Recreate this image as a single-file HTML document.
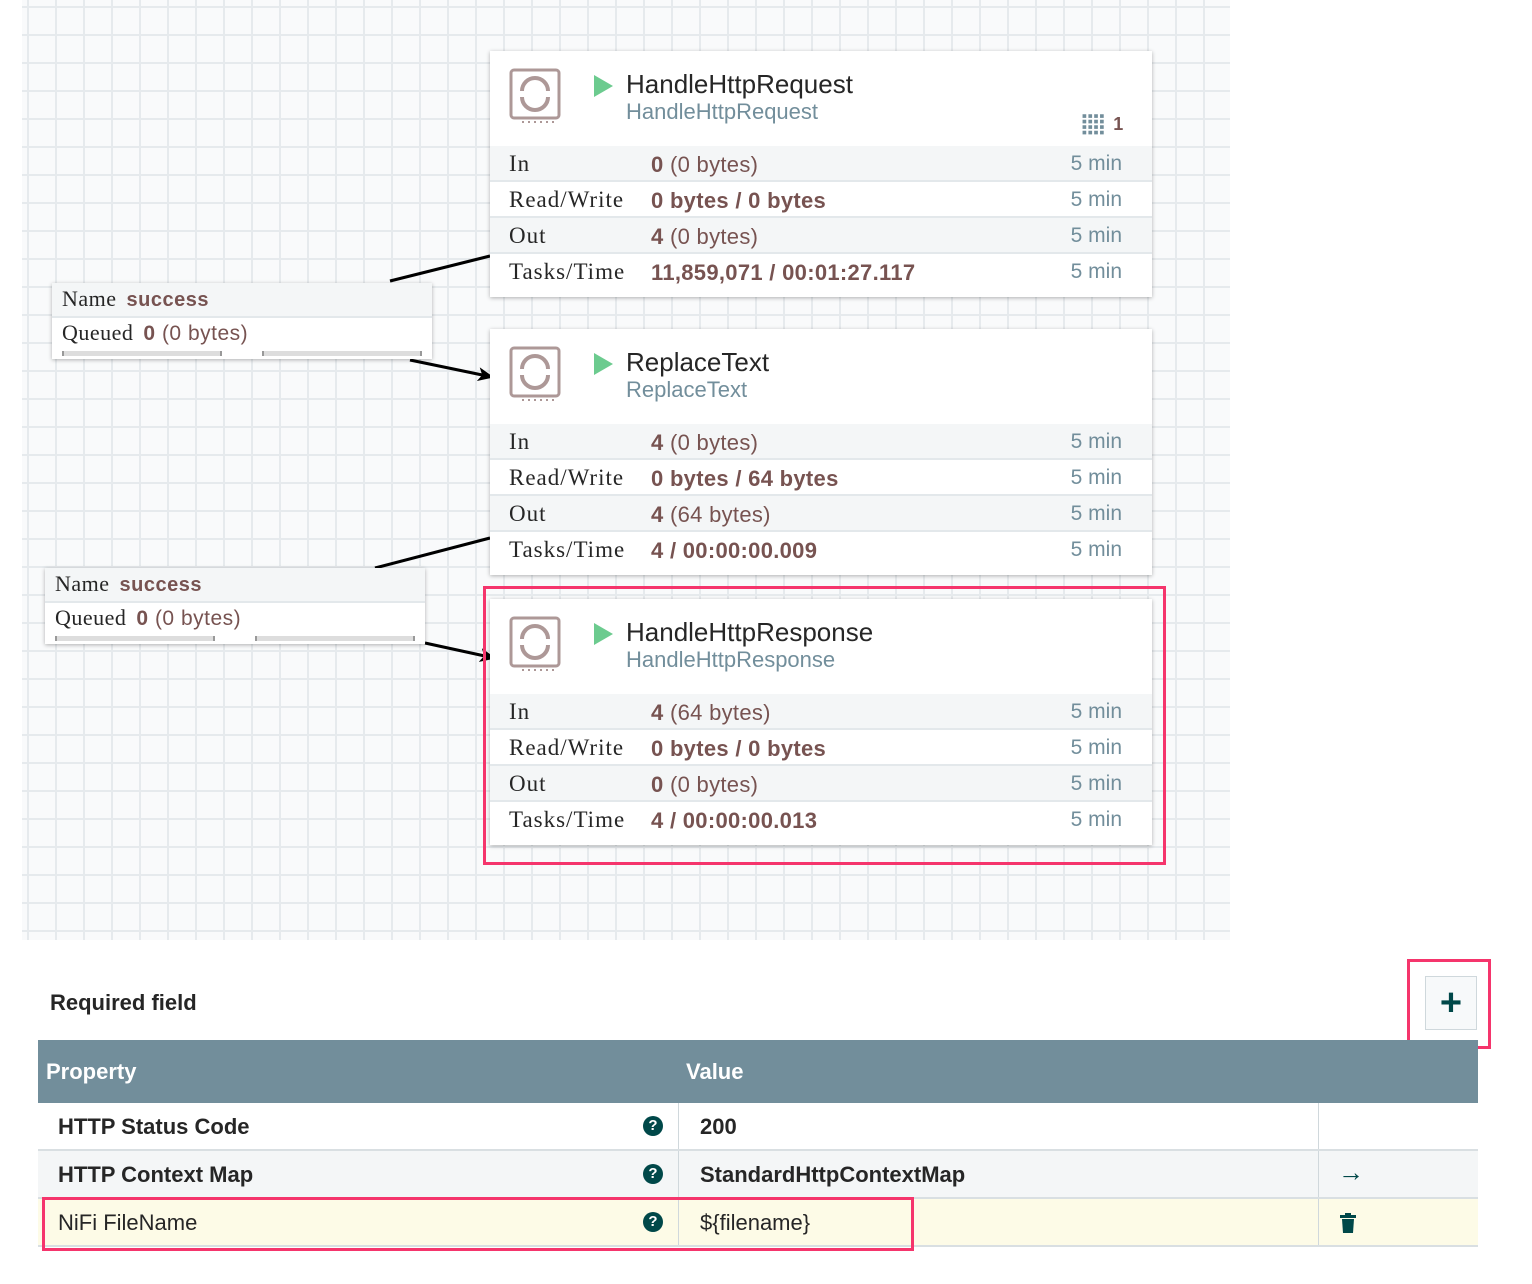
<!DOCTYPE html>
<html><head><meta charset="utf-8"><style>
*{margin:0;padding:0;box-sizing:border-box}
body{width:1532px;height:1284px;background:#fff;position:relative;overflow:hidden;font-family:"Liberation Sans",sans-serif}
.canvas{position:absolute;left:22px;top:0;width:1208px;height:940px;background-color:#f9fafb;
background-image:linear-gradient(to right,#e6eaed 2px,transparent 2px),linear-gradient(to bottom,#e6eaed 2px,transparent 2px);
background-size:28px 28px;background-position:5px 6px}
.proc{position:absolute;left:490px;width:662px;height:246px;background:#fff;box-shadow:0 1px 4px rgba(0,0,0,.3)}
.proc .icon{position:absolute;left:18px;top:16px}
.proc .play{position:absolute;left:104px;top:24px;width:0;height:0;border-left:19px solid #6ccb8f;border-top:11px solid transparent;border-bottom:11px solid transparent}
.proc .name{position:absolute;left:136px;top:18px;font-size:26px;color:#262626}
.proc .type{position:absolute;left:136px;top:48px;font-size:22px;color:#728e9b}
.rows{position:absolute;left:0;top:95px;width:662px}
.row{height:36px;position:relative;border-bottom:2px solid #e3e8eb}
.row.g{background:#f4f6f7}
.row .l{position:absolute;left:19px;top:5px;font-family:"Liberation Serif",serif;font-size:23px;letter-spacing:1px;color:#262626}
.row .v{position:absolute;left:161px;top:6px;font-size:22px;letter-spacing:.3px;color:#775351}
.row .v b{font-weight:bold}
.row .t{position:absolute;right:30px;top:6px;font-size:21px;color:#728e9b}
.conn{position:absolute;width:380px;height:76px;background:#fff;box-shadow:0 1px 4px rgba(0,0,0,.3)}
.conn .n{height:35px;background:#f4f6f7;border-bottom:2px solid #e3e8eb;padding:3px 10px;font-family:"Liberation Serif",serif;font-size:22px;letter-spacing:.5px;color:#262626}
.conn .n b{font-family:"Liberation Sans",sans-serif;color:#775351;font-size:20px;margin-left:10px}
.conn .q{padding:2px 10px;font-family:"Liberation Serif",serif;font-size:22px;letter-spacing:.5px;color:#262626}
.conn .q span{font-family:"Liberation Sans",sans-serif;color:#775351;font-size:21px;margin-left:10px}
.bar{position:absolute;top:68px;height:5px;background:#ddd;border-left:2px solid #999;border-right:2px solid #999}
.tbl{position:absolute;left:38px;top:1040px;width:1440px}
.th{height:63px;background:#728e9b;color:#fff;font-weight:bold;font-size:22px;position:relative}
.tr{height:48px;position:relative;border-bottom:2px solid #d9dfe2;font-size:22px;color:#262626}
.c1{position:absolute;left:20px;top:11px}
.c2{position:absolute;left:662px;top:11px}
.d1{position:absolute;left:640px;top:0;bottom:0;border-left:1px solid #d0d8dc}
.d2{position:absolute;left:1280px;top:0;bottom:0;border-left:1px solid #d0d8dc}
.help{position:absolute;left:605px;top:13px;width:20px;height:20px;border-radius:50%;background:#004849;color:#fff;font-size:15px;font-weight:bold;text-align:center;line-height:20px}
</style></head><body>
<div class="canvas"></div>
<svg style="position:absolute;left:0;top:0" width="1532" height="940">
<defs><marker id="a" markerWidth="16" markerHeight="14" refX="14" refY="7" orient="auto" markerUnits="userSpaceOnUse"><path d="M0,0 L16,7 L0,14 L4,7z" fill="#000"/></marker></defs>
<line x1="390" y1="281" x2="490" y2="256" stroke="#000" stroke-width="3"/>
<line x1="410" y1="360" x2="492" y2="377" stroke="#000" stroke-width="3" marker-end="url(#a)"/>
<line x1="375" y1="568" x2="490" y2="538" stroke="#000" stroke-width="3"/>
<line x1="425" y1="643" x2="494" y2="658" stroke="#000" stroke-width="3" marker-end="url(#a)"/>
</svg>

<div class="proc" style="top:51px">
<svg class="icon" width="56" height="58" viewBox="0 0 56 58"><rect x="3" y="3" width="48" height="48" rx="3" fill="none" stroke="#ad9897" stroke-width="3"/><path d="M14,55 h36" stroke="#ad9897" stroke-width="2" stroke-dasharray="2 4"/><path d="M14,24 A13,13 0 0 1 40,24" fill="none" stroke="#ad9897" stroke-width="4"/><path d="M40,30 A13,13 0 0 1 14,30" fill="none" stroke="#ad9897" stroke-width="4"/></svg>
<div class="play"></div><div class="name">HandleHttpRequest</div><div class="type">HandleHttpRequest</div>
<div style="position:absolute;left:590px;top:60px;font-size:18px;color:#775351;font-weight:bold"><span style="color:#728e9b;font-size:20px;letter-spacing:-3px">⣿⣿</span>&nbsp; 1</div>
<div class="rows">
<div class="row g"><span class="l">In</span><span class="v"><b>0</b> (0 bytes)</span><span class="t">5 min</span></div>
<div class="row"><span class="l">Read/Write</span><span class="v"><b>0 bytes / 0 bytes</b></span><span class="t">5 min</span></div>
<div class="row g"><span class="l">Out</span><span class="v"><b>4</b> (0 bytes)</span><span class="t">5 min</span></div>
<div class="row" style="border:none"><span class="l">Tasks/Time</span><span class="v"><b>11,859,071 / 00:01:27.117</b></span><span class="t">5 min</span></div>
</div></div>

<div class="proc" style="top:329px">
<svg class="icon" width="56" height="58" viewBox="0 0 56 58"><rect x="3" y="3" width="48" height="48" rx="3" fill="none" stroke="#ad9897" stroke-width="3"/><path d="M14,55 h36" stroke="#ad9897" stroke-width="2" stroke-dasharray="2 4"/><path d="M14,24 A13,13 0 0 1 40,24" fill="none" stroke="#ad9897" stroke-width="4"/><path d="M40,30 A13,13 0 0 1 14,30" fill="none" stroke="#ad9897" stroke-width="4"/></svg>
<div class="play"></div><div class="name">ReplaceText</div><div class="type">ReplaceText</div>
<div class="rows">
<div class="row g"><span class="l">In</span><span class="v"><b>4</b> (0 bytes)</span><span class="t">5 min</span></div>
<div class="row"><span class="l">Read/Write</span><span class="v"><b>0 bytes / 64 bytes</b></span><span class="t">5 min</span></div>
<div class="row g"><span class="l">Out</span><span class="v"><b>4</b> (64 bytes)</span><span class="t">5 min</span></div>
<div class="row" style="border:none"><span class="l">Tasks/Time</span><span class="v"><b>4 / 00:00:00.009</b></span><span class="t">5 min</span></div>
</div></div>

<div class="proc" style="top:599px">
<svg class="icon" width="56" height="58" viewBox="0 0 56 58"><rect x="3" y="3" width="48" height="48" rx="3" fill="none" stroke="#ad9897" stroke-width="3"/><path d="M14,55 h36" stroke="#ad9897" stroke-width="2" stroke-dasharray="2 4"/><path d="M14,24 A13,13 0 0 1 40,24" fill="none" stroke="#ad9897" stroke-width="4"/><path d="M40,30 A13,13 0 0 1 14,30" fill="none" stroke="#ad9897" stroke-width="4"/></svg>
<div class="play"></div><div class="name">HandleHttpResponse</div><div class="type">HandleHttpResponse</div>
<div class="rows">
<div class="row g"><span class="l">In</span><span class="v"><b>4</b> (64 bytes)</span><span class="t">5 min</span></div>
<div class="row"><span class="l">Read/Write</span><span class="v"><b>0 bytes / 0 bytes</b></span><span class="t">5 min</span></div>
<div class="row g"><span class="l">Out</span><span class="v"><b>0</b> (0 bytes)</span><span class="t">5 min</span></div>
<div class="row" style="border:none"><span class="l">Tasks/Time</span><span class="v"><b>4 / 00:00:00.013</b></span><span class="t">5 min</span></div>
</div></div>
<div style="position:absolute;left:483px;top:586px;width:683px;height:279px;border:3px solid #f5356c"></div>

<div class="conn" style="left:52px;top:283px">
<div class="n">Name<b>success</b></div>
<div class="q">Queued<span><b>0</b> (0 bytes)</span></div>
<div class="bar" style="left:10px;width:160px"></div><div class="bar" style="left:210px;width:160px"></div>
</div>
<div class="conn" style="left:45px;top:568px">
<div class="n">Name<b>success</b></div>
<div class="q">Queued<span><b>0</b> (0 bytes)</span></div>
<div class="bar" style="left:10px;width:160px"></div><div class="bar" style="left:210px;width:160px"></div>
</div>

<div style="position:absolute;left:50px;top:990px;font-size:22px;font-weight:bold;color:#262626">Required field</div>
<div style="position:absolute;left:1425px;top:976px;width:52px;height:54px;border:1px solid #cfd8dc;background:#f7f9fa;color:#004849;font-size:38px;font-weight:bold;text-align:center;line-height:52px">+</div>
<div style="position:absolute;left:1407px;top:959px;width:84px;height:90px;border:3px solid #f5356c"></div>

<div class="tbl">
<div class="th"><span style="position:absolute;left:8px;top:19px">Property</span><span style="position:absolute;left:648px;top:19px">Value</span></div>
<div class="tr" style="background:#fff;font-weight:bold"><span class="c1">HTTP Status Code</span><span class="help">?</span><span class="d1"></span><span class="c2">200</span><span class="d2"></span></div>
<div class="tr" style="background:#f4f6f7;font-weight:bold"><span class="c1">HTTP Context Map</span><span class="help">?</span><span class="d1"></span><span class="c2">StandardHttpContextMap</span><span class="d2"></span><span style="position:absolute;left:1300px;top:6px;color:#004849;font-size:26px;font-weight:bold">→</span></div>
<div class="tr" style="background:#fdfbe7"><span class="c1">NiFi FileName</span><span class="help">?</span><span class="d1"></span><span class="c2">${filename}</span><span class="d2"></span>
<svg style="position:absolute;left:1302px;top:14px" width="16" height="20" viewBox="0 0 16 20"><rect x="0" y="2" width="16" height="3" fill="#004849"/><rect x="5" y="0" width="6" height="3" fill="#004849"/><path d="M2,6 h12 l-1,14 h-10z" fill="#004849"/></svg></div>
</div>
<div style="position:absolute;left:42px;top:1197px;width:872px;height:54px;border:3px solid #f5356c"></div>
</body></html>
